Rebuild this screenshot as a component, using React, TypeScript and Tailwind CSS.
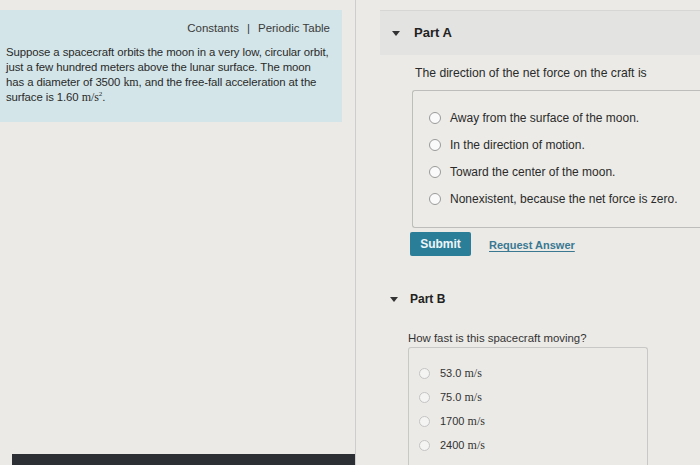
import React from 'react';

const sans = { fontFamily: '"Liberation Sans", Arial, sans-serif' };

function Radio({ size = 'md' }: { size?: 'md' | 'sm' }) {
  return (
    <span
      className={
        size === 'md'
          ? 'inline-block h-[12px] w-[12px] shrink-0 rounded-full border border-[#9a9a9a] bg-[#fafafa]'
          : 'inline-block h-[11px] w-[11px] shrink-0 rounded-full border border-[#c4c4c4] bg-[#f4f4f2]'
      }
    />
  );
}

function Unit({ children, size = 'text-[12px]' }: { children: React.ReactNode; size?: string }) {
  return <span className={`font-['Liberation_Serif',serif] ${size}`}>{children}</span>;
}

const partAOptions = [
  'Away from the surface of the moon.',
  'In the direction of motion.',
  'Toward the center of the moon.',
  'Nonexistent, because the net force is zero.',
];

const partBOptions = ['53.0', '75.0', '1700', '2400'];

export default function App() {
  return (
    <div
      className="flex h-[465px] w-[700px] overflow-hidden bg-[#ebeae6] text-[#2f2f2f]"
      style={sans}
    >
      {/* left: problem statement */}
      <div className="flex w-[356px] shrink-0 flex-col border-r border-[#cdcdcb] pt-[10px]">
        <div className="h-[112px] w-[342px] bg-[#d3e5e8] pt-[10px]">
          <div className="flex justify-end gap-[8px] pr-[12px] text-[11.5px] leading-[16px] text-[#3a3a3a]">
            <span>Constants</span>
            <span>|</span>
            <span>Periodic Table</span>
          </div>
          <p className="mt-[9px] whitespace-nowrap pl-[6px] text-[11.4px] leading-[15px] tracking-[-0.1px] text-[#2a2a2a]">
            Suppose a spacecraft orbits the moon in a very low, circular orbit,
            <br />
            just a few hundred meters above the lunar surface. The moon
            <br />
            has a diameter of 3500 <Unit>km</Unit>, and the free-fall acceleration at the
            <br />
            surface is 1.60{' '}
            <Unit>
              m/s<span className="relative -top-[5px] text-[7px] leading-none">2</span>
            </Unit>
            .
          </p>
        </div>
        <div className="flex-1" />
        <div className="ml-[12px] h-[11px] bg-[#2c2f34]" />
      </div>

      {/* right: parts */}
      <div className="flex flex-1 flex-col pt-[10px] pl-[24px]">
        <div className="flex h-[45px] items-center gap-[14px] border-t border-[#d6d6d4] bg-[#e3e3e1] pl-[12px]">
          <span className="h-0 w-0 border-x-[4px] border-t-[5px] border-x-transparent border-t-[#333]" />
          <span className="text-[13px] font-bold text-[#222]">Part A</span>
        </div>

        <div className="pl-[35px] pt-[11px] text-[12.2px] leading-[14px] text-[#2a2a2a]">
          The direction of the net force on the craft is
        </div>

        <div className="ml-[32px] mt-[10px] flex h-[138px] flex-col gap-[14px] rounded-l-[3px] border border-r-0 border-[#bdbdbb] bg-[#ecebe7] pl-[16px] pt-[20px]">
          {partAOptions.map((o) => (
            <div key={o} className="flex h-[13px] items-center gap-[9px] text-[12px] text-[#2a2a2a]">
              <Radio />
              <span>{o}</span>
            </div>
          ))}
        </div>

        <div className="ml-[30px] mt-[4px] flex items-center gap-[18px]">
          <button className="h-[24px] w-[61px] rounded-[2px] bg-[#2b7e98] text-[12px] font-bold text-[#eef6f8]">
            Submit
          </button>
          <span className="mt-[3px] text-[11px] font-bold text-[#3a7892] underline underline-offset-2">
            Request Answer
          </span>
        </div>

        <div className="mt-[34px] flex items-center gap-[12px] pl-[10px]">
          <span className="h-0 w-0 border-x-[4px] border-t-[5px] border-x-transparent border-t-[#333]" />
          <span className="text-[12px] font-bold text-[#222]">Part B</span>
        </div>

        <div className="pl-[28px] pt-[23px] text-[11.4px] leading-[14px] text-[#333]">
          How fast is this spacecraft moving?
        </div>

        <div className="ml-[28px] mt-[2px] flex w-[240px] flex-1 flex-col gap-[10px] rounded-t-[3px] border border-b-0 border-[#c8c8c6] pl-[10px] pt-[18px]">
          {partBOptions.map((v) => (
            <div key={v} className="flex h-[14px] items-center gap-[10px] text-[11px] text-[#333]">
              <Radio size="sm" />
              <span>
                {v} <Unit size="text-[12px]">m/s</Unit>
              </span>
            </div>
          ))}
        </div>
      </div>
    </div>
  );
}
